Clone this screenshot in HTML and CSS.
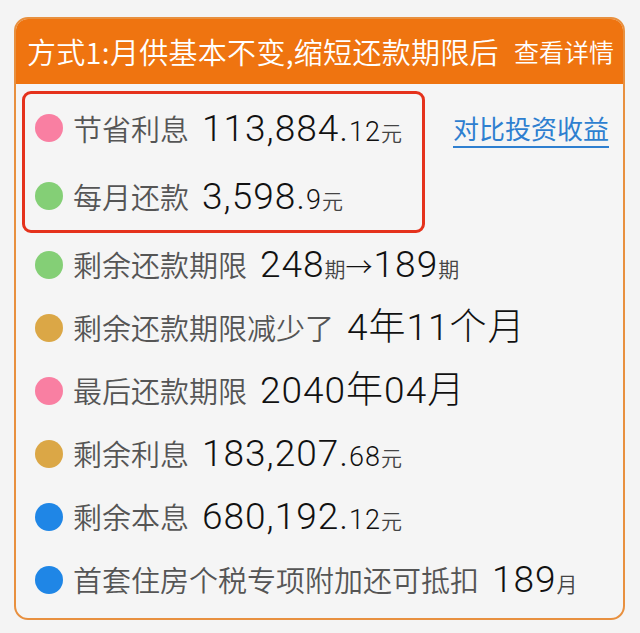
FILE: index.html
```html
<!DOCTYPE html>
<html lang="zh">
<head>
<meta charset="utf-8">
<title>方式1</title>
<link rel="stylesheet" href="styles.css">
</head>
<body>
<div class="card">
  <div class="head">
    <span class="title">方式1:月供基本不变,缩短还款期限后</span>
    <span class="more">查看详情</span>
  </div>
  <div class="body">
    <div class="top">
      <div class="hl">
        <div class="row tall"><span class="dot pink"></span><span class="label">节省利息</span><span class="val">113,884.<small>12</small><i>元</i></span></div>
        <div class="row tall"><span class="dot green"></span><span class="label">每月还款</span><span class="val">3,598.<small>9</small><i>元</i></span></div>
      </div>
      <a class="link">对比投资收益</a>
    </div>
    <div class="row"><span class="dot green"></span><span class="label">剩余还款期限</span><span class="val">248<i>期</i><b>→</b>189<i>期</i></span></div>
    <div class="row"><span class="dot gold"></span><span class="label">剩余还款期限减少了</span><span class="val">4年11个月</span></div>
    <div class="row"><span class="dot pink"></span><span class="label">最后还款期限</span><span class="val">2040年04月</span></div>
    <div class="row"><span class="dot gold"></span><span class="label">剩余利息</span><span class="val">183,207.<small>68</small><i>元</i></span></div>
    <div class="row"><span class="dot blue"></span><span class="label">剩余本息</span><span class="val">680,192.<small>12</small><i>元</i></span></div>
    <div class="row"><span class="dot blue"></span><span class="label">首套住房个税专项附加还可抵扣</span><span class="val">189<i>月</i></span></div>
  </div>
</div>
</body>
</html>
```

FILE: styles.css
```css
* { box-sizing: border-box; }
html, body { margin: 0; padding: 0; }
body {
  background: #f4f4f4;
  font-family: "Noto Sans CJK SC", "Noto Sans", sans-serif;
  width: 640px;
  height: 633px;
  overflow: hidden;
}
.card {
  margin: 17px 0 0 14px;
  width: 611px;
  border: 2px solid #e8903f;
  border-radius: 14px;
  overflow: hidden;
  background: #f5f5f5;
}
.head {
  background: #ef7410;
  height: 65px;
  display: flex;
  align-items: center;
  justify-content: space-between;
  padding: 0 9px 0 11px;
  color: #fff;
}
.title { font-size: 29px; line-height: 1; letter-spacing: 0.3px; font-weight: 350; }
.more { font-size: 25px; line-height: 1; font-weight: 350; }
.body {
  padding: 7px 0 7px 0;
}
.top {
  display: flex;
  align-items: flex-start;
}
.hl {
  margin-left: 6px;
  width: 403px;
  border: 3px solid #e5321c;
  border-radius: 9px;
  padding: 0 0 0 10px;
}
.link {
  margin: 22px 0 0 28px;
  font-size: 26px;
  line-height: 30px;
  color: #2e7fd0;
  text-decoration: none;
  border-bottom: 2px solid #2e7fd0;
  padding-bottom: 3px;
}
.row {
  display: flex;
  align-items: center;
  height: 63px;
  padding-left: 19px;
}
.hl .row { padding-left: 0; height: 68px; }
.dot {
  width: 28px;
  height: 28px;
  border-radius: 50%;
  flex: none;
  margin-right: 10px;
}
.pink { background: #f97fa2; }
.green { background: #84cf76; }
.gold { background: #dba746; }
.blue { background: #1f86e6; }
.label {
  font-size: 29px;
  color: #555;
  line-height: 1;
  margin-right: 13px;
  font-weight: 350;
}
.val {
  font-family: Roboto, "Noto Sans CJK SC", sans-serif;
  font-size: 37px;
  font-weight: 300;
  color: #111;
  line-height: 1;
  letter-spacing: 1px;
  white-space: nowrap;
}
.val small { font-size: 27px; }
.val i { font-style: normal; font-size: 21px; color: #444; font-family: "Noto Sans CJK SC", sans-serif; font-weight: 350; letter-spacing: 0; }
.val b { font-weight: 300; font-size: 27px; }
```
